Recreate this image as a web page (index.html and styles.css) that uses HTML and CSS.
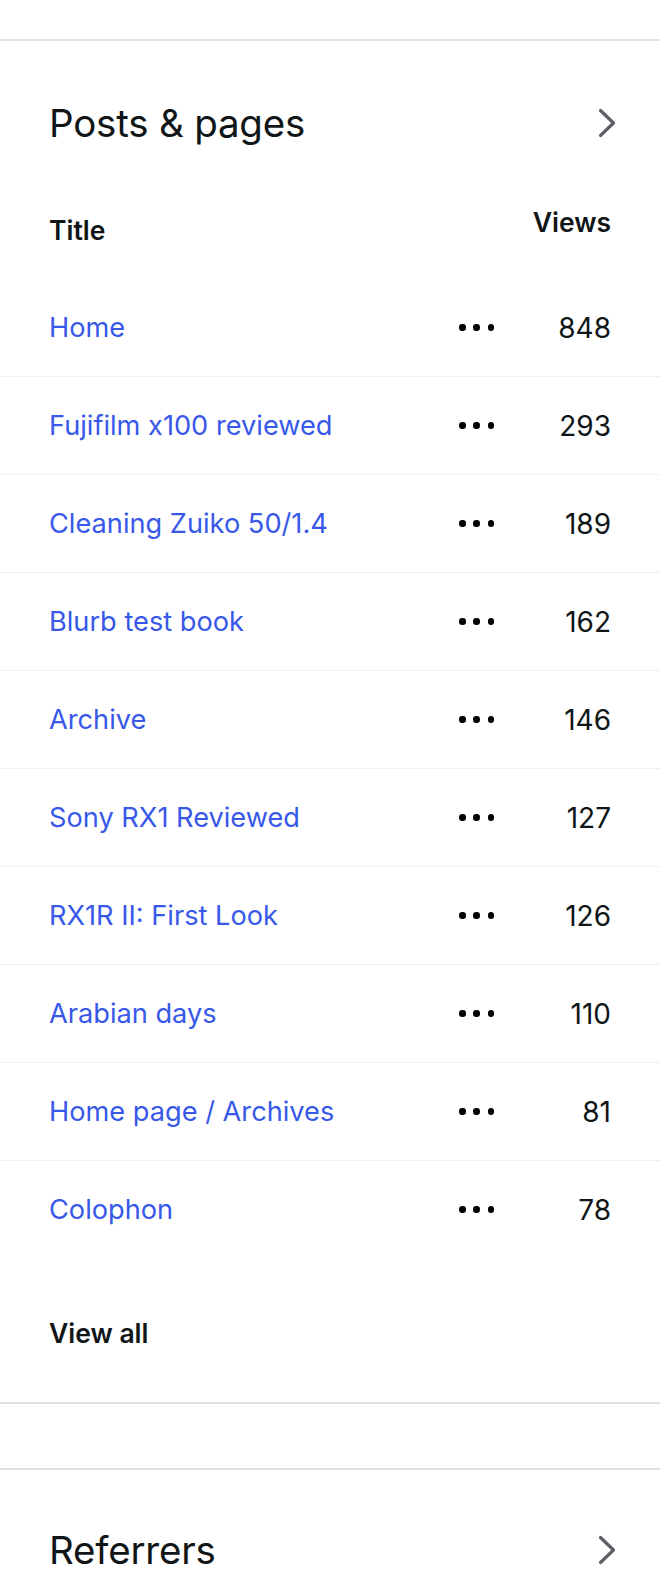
FILE: index.html
```html
<!DOCTYPE html>
<html lang="en">
<head>
<meta charset="utf-8">
<title>Stats</title>
<link rel="stylesheet" href="styles.css">
</head>
<body>
<div class="prev-end"></div>
<section class="card">
  <div class="card-head">
    <h2 class="card-title">Posts &amp; pages</h2>
    <svg class="chev" width="18" height="30" viewBox="0 0 18 30"><polyline points="2.5,2.5 15.5,15 2.5,27.5" fill="none" stroke="#5c6066" stroke-width="3.2" stroke-linecap="round" stroke-linejoin="round"/></svg>
  </div>
  <div class="thead">
    <span class="th-title">Title</span>
    <span class="th-views">Views</span>
  </div>
  <ul class="rows">
    <li class="row"><a class="row-title" href="#">Home</a><span class="dots"><i></i><i></i><i></i></span><span class="num">848</span></li>
    <li class="row"><a class="row-title" href="#">Fujifilm x100 reviewed</a><span class="dots"><i></i><i></i><i></i></span><span class="num">293</span></li>
    <li class="row"><a class="row-title" href="#">Cleaning Zuiko 50/1.4</a><span class="dots"><i></i><i></i><i></i></span><span class="num">189</span></li>
    <li class="row"><a class="row-title" href="#">Blurb test book</a><span class="dots"><i></i><i></i><i></i></span><span class="num">162</span></li>
    <li class="row"><a class="row-title" href="#">Archive</a><span class="dots"><i></i><i></i><i></i></span><span class="num">146</span></li>
    <li class="row"><a class="row-title" href="#">Sony RX1 Reviewed</a><span class="dots"><i></i><i></i><i></i></span><span class="num">127</span></li>
    <li class="row"><a class="row-title" href="#">RX1R II: First Look</a><span class="dots"><i></i><i></i><i></i></span><span class="num">126</span></li>
    <li class="row"><a class="row-title" href="#">Arabian days</a><span class="dots"><i></i><i></i><i></i></span><span class="num">110</span></li>
    <li class="row"><a class="row-title" href="#">Home page / Archives</a><span class="dots"><i></i><i></i><i></i></span><span class="num">81</span></li>
    <li class="row"><a class="row-title" href="#">Colophon</a><span class="dots"><i></i><i></i><i></i></span><span class="num">78</span></li>
  </ul>
  <a class="view-all" href="#">View all</a>
</section>
<section class="card card-next">
  <div class="card-head">
    <h2 class="card-title">Referrers</h2>
    <svg class="chev" width="18" height="30" viewBox="0 0 18 30"><polyline points="2.5,2.5 15.5,15 2.5,27.5" fill="none" stroke="#5c6066" stroke-width="3.2" stroke-linecap="round" stroke-linejoin="round"/></svg>
  </div>
</section>
</body>
</html>
```
FILE: styles.css
```css
html, body {
  margin: 0;
  padding: 0;
  background: #fff;
}
body {
  font-family: Inter, "Noto Sans", "Liberation Sans", sans-serif;
  color: #101517;
  overflow: hidden;
}
.prev-end {
  height: 39px;
}
.card {
  border-top: 2px solid #e0e0e0;
  border-bottom: 2px solid #e0e0e0;
}
.card-next {
  margin-top: 64px;
  border-bottom: none;
}
.card-head {
  display: flex;
  align-items: center;
  justify-content: space-between;
  padding: 60px 44px 0 49px;
  height: 44px;
}
.card-next .card-head {
  padding-top: 58px;
}
.card-title {
  margin: 0;
  font-size: 38.5px;
  line-height: 44px;
  font-weight: 400;
  letter-spacing: -0.2px;
  color: #101517;
}
.chev {
  display: block;
}
.thead {
  display: flex;
  justify-content: space-between;
  align-items: flex-start;
  padding: 62px 49px 34px 49px;
  font-size: 26.5px;
  line-height: 30px;
  font-weight: 560;
}
.th-title {
  margin-top: 8px;
}
.rows {
  list-style: none;
  margin: 0;
  padding: 0;
}
.row {
  display: flex;
  align-items: center;
  height: 97px;
  padding: 0 49px;
  border-bottom: 1px solid #f0f0f0;
}
.row:last-child {
  border-bottom: none;
}
.row-title {
  flex: 1;
  color: #3858e9;
  text-decoration: none;
  font-size: 27.2px;
  line-height: 32px;
}
.dots {
  display: flex;
  justify-content: space-between;
  width: 35px;
}
.dots i {
  display: block;
  width: 6.5px;
  height: 6.5px;
  border-radius: 50%;
  background: #000;
}
.num {
  width: 117px;
  text-align: right;
  font-size: 28px;
  line-height: 32px;
  color: #101517;
}
.view-all {
  display: block;
  margin: 60px 49px 0;
  padding-bottom: 54px;
  font-size: 26.5px;
  line-height: 30px;
  font-weight: 560;
  color: #101517;
  text-decoration: none;
}
```
